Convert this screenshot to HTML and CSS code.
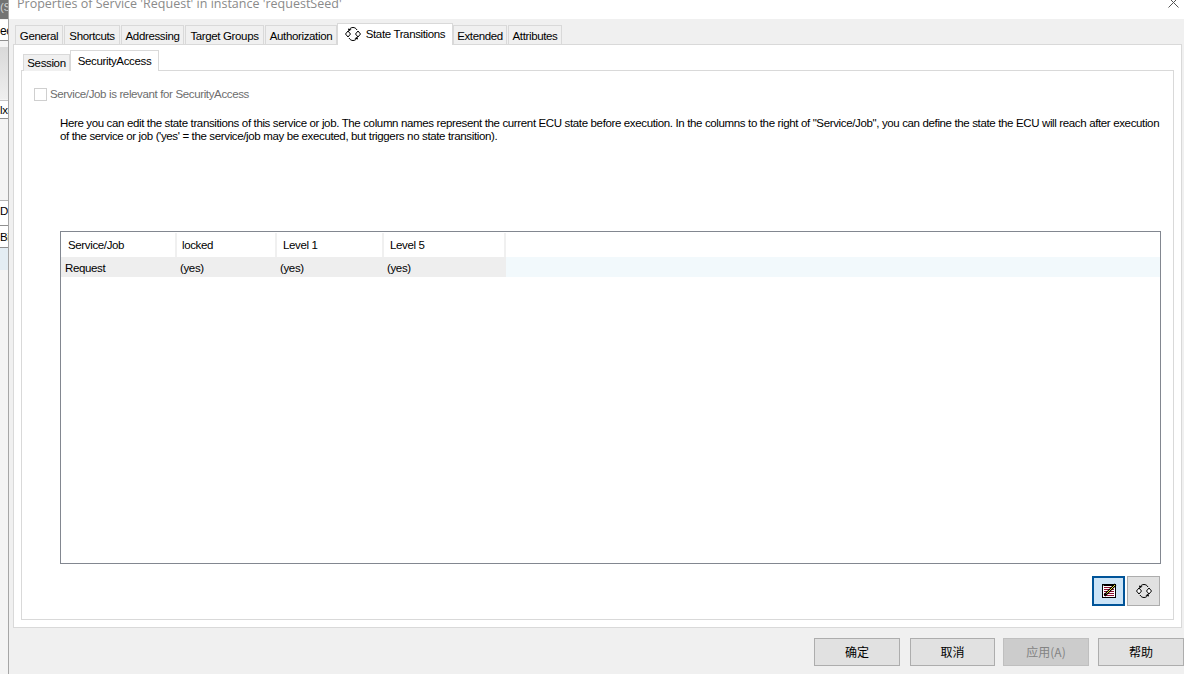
FILE: index.html
```html
<!DOCTYPE html>
<html lang="en">
<head>
<meta charset="utf-8">
<title>Properties of Service</title>
<link rel="stylesheet" href="styles.css">
</head>
<body>
<svg class="defs" width="0" height="0" aria-hidden="true">
  <symbol id="cycle" viewBox="0 0 16 14">
    <path d="M4 3C5 1.200 6.500 .5 8 .5S11 1.200 12 3M12 11C11 12.800 9.500 13.500 8 13.500S5 12.800 4 11" fill="none" stroke="#000" stroke-width="1"/>
    <path d="M3 4 5.500 7 3 10 .5 7zM13 4 15.500 7 13 10 10.500 7z" fill="#fff" stroke="#000" stroke-width="1"/>
    <path d="M3 1.500 6.500 2.500 3.500 4.500zM13 12.500 9.500 11.500 12.500 9.500z" fill="#000"/>
  </symbol>
</svg>
<div class="desktop">
  <aside class="backapp">
    <div class="back-title">(S</div>
    <div class="back-row back-a">ec</div>
    <div class="back-band"></div>
    <div class="back-row back-b">lx(</div>
    <div class="back-row back-c">D</div>
    <div class="back-row back-d">Bi</div>
    <div class="back-sel"></div>
  </aside>
  <main class="dialog">
    <header class="titlebar">
      <span class="title">Properties of Service 'Request' in instance 'requestSeed'</span>
      <svg class="close" width="11" height="11" viewBox="0 0 11 11"><path d="M.5 .5l10 10M10.500 .5l-10 10" stroke="#555" fill="none"/></svg>
    </header>
    <div class="body">
      <nav class="tabs">
        <span class="tab w-general">General</span>
        <span class="tab w-shortcuts">Shortcuts</span>
        <span class="tab w-addressing">Addressing</span>
        <span class="tab w-target">Target Groups</span>
        <span class="tab w-auth">Authorization</span>
        <span class="tab tab-active w-state"><svg class="tab-icon" width="16" height="14"><use href="#cycle"/></svg>State Transitions</span>
        <span class="tab w-extended">Extended</span>
        <span class="tab w-attributes">Attributes</span>
      </nav>
      <section class="panel">
        <nav class="subtabs">
          <span class="subtab w-session">Session</span>
          <span class="subtab subtab-active w-security">SecurityAccess</span>
        </nav>
        <div class="inner">
          <label class="check"><span class="checkbox"></span>Service/Job is relevant for SecurityAccess</label>
          <p class="desc">Here you can edit the state transitions of this service or job. The column names represent the current ECU state before execution. In the columns to the right of "Service/Job", you can define the state the ECU will reach after execution of the service or job ('yes' = the service/job may be executed, but triggers no state transition).</p>
          <div class="grid">
            <div class="row head">
              <span class="cell c1">Service/Job</span>
              <span class="cell c2">locked</span>
              <span class="cell c3">Level 1</span>
              <span class="cell c4">Level 5</span>
            </div>
            <div class="row data">
              <span class="cell c1">Request</span>
              <span class="cell c2">(yes)</span>
              <span class="cell c3">(yes)</span>
              <span class="cell c4">(yes)</span>
              <span class="rest"></span>
            </div>
          </div>
          <div class="tools">
            <button class="tool tool-on" type="button">
              <svg width="16" height="16" viewBox="0 0 16 16">
                <rect x="1.500" y="1.500" width="13" height="13" fill="#fff" stroke="#000"/>
                <path d="M2.500 2.500h11" stroke="#000" fill="none"/>
                <path d="M3 4.500h10M3 6.500h10M3 8.500h10M3 10.500h10M3 12.500h10" stroke="#8a1030" fill="none"/>
                <path d="M3.500 12.500 14.500 1.500" stroke="#000" stroke-width="2.500" fill="none"/>
                <path d="M5.500 10.500 14 2" stroke="#f2e64a" stroke-width="1" fill="none"/>
              </svg>
            </button>
            <button class="tool" type="button"><svg width="16" height="14"><use href="#cycle"/></svg></button>
          </div>
        </div>
      </section>
      <footer class="actions">
        <button class="btn" type="button">确定</button>
        <button class="btn btn-narrow gap-b" type="button">取消</button>
        <button class="btn btn-off gap-c" type="button">应用(A)</button>
        <button class="btn gap-d" type="button">帮助</button>
      </footer>
    </div>
  </main>
</div>
</body>
</html>
```

FILE: styles.css
```css
* { box-sizing: border-box; }
html, body { margin: 0; padding: 0; }
body {
  width: 1184px;
  height: 674px;
  overflow: hidden;
  background: #fff;
  font: 11.500px/14px "Liberation Sans", "Noto Sans CJK SC", sans-serif;
  letter-spacing: -0.36px;
  color: #000;
}
.defs { position: absolute; }
.desktop { display: flex; height: 674px; }

.backapp {
  width: 9px;
  flex: none;
  display: flex;
  flex-direction: column;
  overflow: hidden;
  background: #f4f4f4;
  border-right: 1px solid #a6a6a6;
}
.back-title { height: 19px; flex: none; background: #737373; color: #cfcfcf; line-height: 14px; overflow: hidden; }
.back-row { flex: none; white-space: nowrap; overflow: hidden; background: #fff; border-bottom: 1px solid #8f8f8f; }
.back-a { height: 21px; margin-top: 1px; padding-top: 4px; font-size: 12px; }
.back-band { height: 52px; margin-top: 6px; flex: none; background: linear-gradient(180deg, #d9d9d9, #efefef); }
.back-b { height: 19px; margin-top: 1px; padding-top: 2px; border-top: 1px solid #c5c5c5; }
.back-c { height: 26px; margin-top: 81px; padding-top: 3px; border-top: 1px solid #b5b5b5; }
.back-d { height: 22px; padding-top: 4px; }
.back-sel { height: 22px; flex: none; background: #e4edf3; }

.dialog { flex: 1; display: flex; flex-direction: column; min-width: 0; }
.titlebar {
  height: 19px;
  flex: none;
  background: #fff;
  display: flex;
  justify-content: space-between;
  overflow: hidden;
  padding: 0 5px 0 8px;
}
.title {
  font: 12.500px/18px "Open Sans", sans-serif;
  letter-spacing: 0;
  color: #8a8a8a;
  margin-top: -5px;
  white-space: nowrap;
}
.close { margin: -3px 0 0; }

.body {
  flex: 1;
  background: #f0f0f0;
  padding: 4px 2px 0 4px;
  display: flex;
  flex-direction: column;
  min-height: 0;
}

.tabs { display: flex; align-items: flex-end; height: 21px; padding-left: 2px; position: relative; z-index: 1; }
.tab {
  height: 19px;
  display: flex;
  align-items: center;
  justify-content: center;
  background: #f0f0f0;
  border: 1px solid #d9d9d9;
  border-bottom: 0;
  margin-right: 1px;
  padding-top: 2px;
  white-space: nowrap;
}
.tab-active {
  height: 22px;
  background: #fff;
  margin: 0 0 -1px -1px;
  padding: 0 0 1px;
  gap: 5px;
}
.tab-icon { flex: none; }
.w-general { width: 48px; }
.w-shortcuts { width: 56px; }
.w-addressing { width: 63px; }
.w-target { width: 79px; }
.w-auth { width: 72px; }
.w-state { width: 116px; }
.w-extended { width: 54px; }
.w-attributes { width: 54px; }

.panel {
  height: 584px;
  flex: none;
  background: #fff;
  border: 1px solid #d9d9d9;
  padding: 5px 7px 7px 7px;
  display: flex;
  flex-direction: column;
}
.subtabs { display: flex; align-items: flex-end; height: 21px; padding-left: 2px; position: relative; z-index: 1; margin-bottom: -1px; }
.subtab {
  height: 17px;
  display: flex;
  align-items: center;
  justify-content: center;
  background: #f0f0f0;
  border: 1px solid #d9d9d9;
  border-bottom: 0;
  white-space: nowrap;
  padding-bottom: 1px;
}
.subtab-active { height: 21px; background: #fff; padding: 0 0 1px; }
.w-session { width: 47px; }
.w-security { width: 89px; }

.inner {
  flex: 1;
  background: #fff;
  border: 1px solid #d9d9d9;
  padding: 16px 12px 0 12px;
  display: flex;
  flex-direction: column;
  min-height: 0;
}
.check { display: flex; align-items: center; gap: 3px; color: #6d6d6d; height: 14px; }
.checkbox { width: 13px; height: 13px; border: 1px solid #cfcfcf; background: #fff; }
.desc { margin: 16px 0 0 26px; width: 1102px; height: 114px; line-height: 13px; }

.grid {
  margin-left: 26px;
  width: 1101px;
  height: 333px;
  flex: none;
  border: 1px solid #828790;
}
.row { display: flex; }
.head { height: 25px; padding-top: 1px; }
.data { height: 20px; }
.cell { display: flex; align-items: center; white-space: nowrap; }
.head .cell { border-right: 2px solid #f0f0f0; padding-left: 6px; }
.head .c1 { padding-left: 7px; }
.head .c2 { padding-left: 5px; }
.data .cell { background: #eeeeee; padding: 2px 0 0 3px; }
.data .c1 { padding-left: 4px; }
.c1 { width: 116px; }
.c2 { width: 100px; }
.c3 { width: 107px; }
.c4 { width: 122px; }
.rest { flex: 1; background: #f2f9fc; }

.tools { display: flex; justify-content: flex-end; gap: 2px; margin: 12px 0 0; width: 1126px; }
.tool { width: 33px; height: 30px; padding: 0; display: flex; align-items: center; justify-content: center; background: #e1e1e1; border: 1px solid #adadad; }
.tool-on { background: #cce4f7; border: 2px solid #005499; }

.actions { display: flex; padding: 10px 0 0 801px; margin-right: -2px; }
.btn {
  width: 86px;
  height: 28px;
  flex: none;
  padding: 0;
  font: 12px/14px "Noto Sans CJK SC", sans-serif;
  letter-spacing: 0;
  background: #e1e1e1;
  border: 1px solid #adadad;
  color: #000;
}
.btn-narrow { width: 85px; }
.gap-b { margin-left: 10px; }
.gap-c { margin-left: 8px; }
.gap-d { margin-left: 9px; }
.btn-off { background: #cccccc; border-color: #bfbfbf; color: #838383; }
```
